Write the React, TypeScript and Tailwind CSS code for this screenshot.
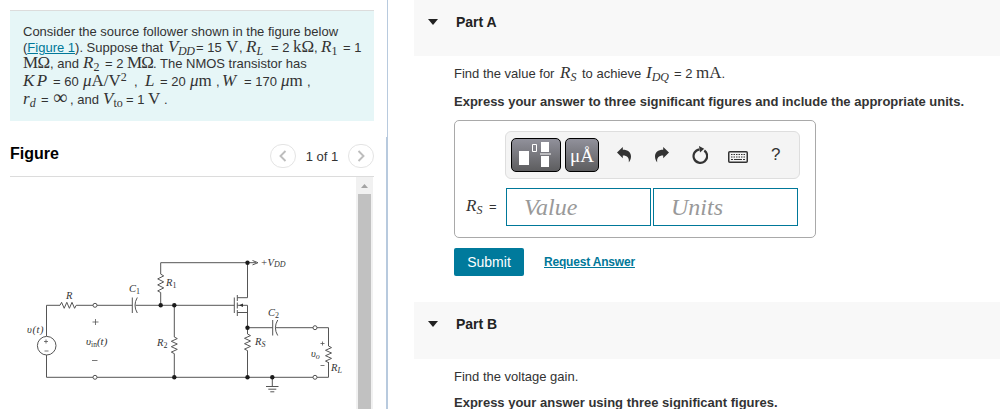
import type { ReactNode } from 'react'

interface SegProps {
  w: string
  children: ReactNode
}

function Seg({ w, children }: SegProps) {
  return <span className={`shrink-0 whitespace-pre ${w}`}>{children}</span>
}

interface MathProps {
  children: ReactNode
  sub?: string
  upright?: boolean
  subUpright?: boolean
}

function M({ children, sub, upright, subUpright }: MathProps) {
  return (
    <span
      className={`font-['Liberation_Serif',serif] text-[17px] leading-[0] ${upright ? '' : 'italic'}`}
    >
      {children}
      {sub && (
        <span
          className={`relative top-[2.5px] text-[12px] ${subUpright ? 'not-italic' : ''}`}
        >
          {sub}
        </span>
      )}
    </span>
  )
}

function Line({ h, children }: { h: string; children: ReactNode }) {
  return <div className={`flex items-baseline ${h}`}>{children}</div>
}

function Problem() {
  return (
    <div className="ml-[10px] mt-[10px] h-[111px] w-[364px] border-t border-[#dcdcdc] bg-[#e6f6f7] pt-[13px] pl-[13px] text-[13px] leading-4 text-[#333]">
      <Line h="h-4">
        <Seg w="">Consider the source follower shown in the figure below</Seg>
      </Line>
      <Line h="h-4">
        <Seg w="w-[145px]">
          (<a className="text-[#007899] underline">Figure 1</a>). Suppose that
        </Seg>
        <Seg w="w-[28px] tracking-[-0.4px]"><M sub="DD">V</M></Seg>
        <Seg w="w-[30px]">= 15</Seg>
        <Seg w="w-[13px]"><M upright>V</M></Seg>
        <Seg w="w-[7px]">,</Seg>
        <Seg w="w-[25px]"><M sub="L">R</M></Seg>
        <Seg w="w-[22px]">= 2</Seg>
        <Seg w="w-[21px]"><M upright>kΩ</M></Seg>
        <Seg w="w-[7px]">,</Seg>
        <Seg w="w-[22px]"><M sub="1" subUpright>R</M></Seg>
        <Seg w="w-[20px]">= 1</Seg>
      </Line>
      <Line h="h-[18px]">
        <Seg w="w-[27px] tracking-[-0.6px]"><M upright>MΩ</M></Seg>
        <Seg w="w-[33px]">, and</Seg>
        <Seg w="w-[22px]"><M sub="2" subUpright>R</M></Seg>
        <Seg w="w-[22px]">= 2</Seg>
        <Seg w="w-[26px] tracking-[-0.8px]"><M upright>MΩ</M></Seg>
        <Seg w="">. The NMOS transistor has</Seg>
      </Line>
      <Line h="h-[18px]">
        <Seg w="w-[30px] tracking-[2.5px]"><M>KP</M></Seg>
        <Seg w="w-[30px]">= 60</Seg>
        <Seg w="w-[51px]">
          <M>μ</M>
          <M upright>A/V</M>
          <span className="relative -top-[5px] font-['Liberation_Serif',serif] text-[12px] leading-[0]">2</span>
        </Seg>
        <Seg w="w-[11px]">,</Seg>
        <Seg w="w-[15px]"><M>L</M></Seg>
        <Seg w="w-[30px]">= 20</Seg>
        <Seg w="w-[26px]"><M>μ</M><M upright>m</M></Seg>
        <Seg w="w-[6px]">,</Seg>
        <Seg w="w-[22px]"><M>W</M></Seg>
        <Seg w="w-[37px]">= 170</Seg>
        <Seg w="w-[26px]"><M>μ</M><M upright>m</M></Seg>
        <Seg w="">,</Seg>
      </Line>
      <Line h="h-[17px]">
        <Seg w="w-[18px]"><M sub="d">r</M></Seg>
        <Seg w="w-[12px]">=</Seg>
        <Seg w="w-[17px]">
          <span className="font-['Liberation_Serif',serif] text-[20px] leading-[0]">∞</span>
        </Seg>
        <Seg w="w-[33px]">, and</Seg>
        <Seg w="w-[23px]"><M sub="to" subUpright>V</M></Seg>
        <Seg w="w-[22px]">= 1</Seg>
        <Seg w="w-[16px]"><M upright>V</M></Seg>
        <Seg w="">.</Seg>
      </Line>
    </div>
  )
}

function Circuit() {
  const dots = [
    [247.5, 262.7], [160.7, 305.3], [174.3, 305.3], [247.5, 327.7],
    [174.3, 377.3], [247.5, 377.3], [272.3, 377.3],
  ]
  const rings = [[95, 305.3], [95, 377.3], [315, 327.7], [315, 377.3]]
  return (
    <svg
      width="346"
      height="232"
      viewBox="10 177 346 232"
      fill="none"
      stroke="#555"
      strokeWidth="1"
      className="shrink-0"
    >
      <path d="M46.5 336V305.3H60l1.6-3 2.6 6 2.6-6 2.6 6 2.6-6 2.6 6 1.6-3H132.3M135.5 305.3H234.3M46.5 355V377.3H328.5V362" />
      <circle cx="46.7" cy="345.7" r="9.3" />
      <path d="M132.3 297.5v15.5M137.3 297.5q-4.6 7.8 0 15.5" />
      <path d="M160.7 305.3V292.5l-3-1.6 6-3-6-3 6-3-6-3 6-3-3-1.8V262.7H256" />
      <path d="M252.5 260.5l5.5 2.2-5.5 2.2" />
      <path d="M174.3 305.3V337l3 1.6-6 2.7 6 2.7-6 2.7 6 2.7-6 2.7 3 1.5V377.3" />
      <path d="M234.3 297.5v15.5M237.3 295v6M237.3 302.5v6M237.3 310v6M247.5 262.7V297.7H237.3M237.3 305.3H247.5V334l3 1.6-6 2.7 6 2.7-6 2.7 6 2.7-6 2.7 3 1.5V377.3M237.3 312.5H247.5" />
      <path d="M239 305.3l4-1.8v3.6z" fill="#333" stroke="none" />
      <path d="M247.5 327.7H272.7M272.7 320v15.5M277.7 320q-4.6 7.8 0 15.5M275.5 327.7H328.5V346l3 1.6-6 2.7 6 2.7-6 2.7 6 2.7-6 2.7 3 1.5" />
      <path d="M272.3 377.3V386.5M266 386.5h12.5M268.3 389.2h8M270.3 391.8h4" />
      {dots.map(([x, y]) => (
        <circle key={`${x}-${y}`} cx={x} cy={y} r="2.2" fill="#1c1c1c" stroke="none" />
      ))}
      {rings.map(([x, y]) => (
        <circle key={`${x}-${y}`} cx={x} cy={y} r="2" fill="#fff" />
      ))}
      <g
        fill="#333"
        stroke="none"
        className="font-['Liberation_Serif',serif] text-[10.5px] italic"
      >
        <text x="66" y="299">R</text>
        <text x="129" y="292">C<tspan dy="2" fontSize="8" fontStyle="normal">1</tspan></text>
        <text x="166" y="286">R<tspan dy="2" fontSize="8" fontStyle="normal">1</tspan></text>
        <text x="157" y="346">R<tspan dy="2" fontSize="8" fontStyle="normal">2</tspan></text>
        <text x="255" y="345">R<tspan dy="2" fontSize="8">S</tspan></text>
        <text x="268" y="316">C<tspan dy="2" fontSize="8" fontStyle="normal">2</tspan></text>
        <text x="331" y="371">R<tspan dy="2" fontSize="8">L</tspan></text>
        <text x="260.5" y="266">+V<tspan dy="1" fontSize="8">DD</tspan></text>
        <text x="27" y="333" textLength="16.5">υ(t)</text>
        <text x="86" y="345" fontSize="11">υ<tspan dy="2" fontSize="7.5" fontStyle="normal">in</tspan><tspan dy="-2">(t)</tspan></text>
        <text x="311" y="357">υ<tspan dy="2" fontSize="8">o</tspan></text>
      </g>
      <path d="M92.5 322h6M95.5 319v6M92 360.5h5.5M44 341.5h4M46 339.5v4M44.5 351h4M320.5 343.5h4M322.5 341.5v4M320.5 365.5h4" strokeWidth=".8" />
    </svg>
  )
}

function Chevron({ d }: { d: string }) {
  return (
    <button className="flex h-6 w-[26px] items-center justify-center rounded-full border border-[#e4e4e4]">
      <svg width="8" height="12" viewBox="0 0 8 12" fill="none" stroke="#bdbdbd" strokeWidth="1.9">
        <path d={d} />
      </svg>
    </button>
  )
}

function Figure() {
  return (
    <div className="ml-[10px] w-[364px]">
      <div className="flex h-[56px] border-b border-[#dcdcdc]">
        <h2 className="mt-[23px] text-base leading-5 font-bold text-black">Figure</h2>
        <div className="mt-[23px] ml-auto flex h-6 w-[104px] items-center justify-between">
          <Chevron d="M6.5 1L1.5 6l5 5" />
          <span className="pt-0.5 text-[13px] text-[#333]">1 of 1</span>
          <Chevron d="M1.5 1l5 5-5 5" />
        </div>
      </div>
      <div className="flex h-[232px]">
        <Circuit />
        <div className="flex w-[17px] flex-col items-center bg-[#f1f1f1]">
          <svg width="17" height="17" viewBox="0 0 17 17" fill="#a3a3a3">
            <path d="M5 11l3.5-4 3.5 4z" />
          </svg>
          <div className="w-[13px] flex-1 bg-[#c1c1c1]" />
        </div>
      </div>
    </div>
  )
}

function PartHeader({ title, h }: { title: string; h: string }) {
  return (
    <div className={`flex bg-[#f8f8f8] pl-[14px] ${h}`}>
      <svg width="10" height="6" viewBox="0 0 10 6" className="mt-[19px]" fill="#222">
        <path d="M0 0h10L5 6z" />
      </svg>
      <h2 className="mt-[13px] ml-[18px] text-sm leading-[18px] font-bold text-[#222]">{title}</h2>
    </div>
  )
}

function TemplateIcon() {
  return (
    <svg width="48" height="32" viewBox="0 0 48 32" fill="#fff">
      <path d="M7 12h10v14H7zM29 3h8v10h-8zM29 17h8v11h-8zM28 14.5h11v1H28z" />
      <path d="M20.5 5.5h4v7h-4z" fill="none" stroke="#fff" />
    </svg>
  )
}

function Answer() {
  return (
    <div className="mt-[9px] ml-10 h-[118px] w-[362px] rounded-[5px] border border-[#a9a9a9] pt-[10px] pl-[50px]">
      <div className="flex h-12 w-[295px] items-center rounded-md border border-[#dedede] bg-[#f4f4f4] pl-[5px] text-[#333]">
        <button className="h-[34px] w-[50px] rounded-[5px] border border-black bg-linear-to-b from-[#91919b] to-[#5d5d5f]">
          <TemplateIcon />
        </button>
        <button className="ml-1 h-[34px] w-[34px] rounded-[5px] border border-black bg-linear-to-b from-[#91919b] to-[#5d5d5f] font-['Liberation_Serif',serif] text-[19px] leading-[34px] text-white">
          μÅ
        </button>
        <svg width="14" height="16" viewBox="0 0 14 16" className="ml-[18px]" fill="#333">
          <path d="M0 5.5L5.8 0v2.8C11 2.8 14 5.5 14 9.500C14 12 13 14 11.800 15.200C12.300 11 10.500 8.600 5.800 8.600v2.600z" />
        </svg>
        <svg width="14" height="16" viewBox="0 0 14 16" className="ml-6" fill="#333">
          <path d="M14 5.500L8.200 0v2.800C3 2.800 0 5.500 0 9.500C0 12 1 14 2.200 15.200C1.700 11 3.500 8.600 8.200 8.600v2.600z" />
        </svg>
        <svg width="16" height="18" viewBox="0 0 16 18" className="ml-[23px]" fill="none" stroke="#333" strokeWidth="2.2">
          <path d="M12.300 4.500A6.800 6.800 0 1 1 7.500 3.300" />
          <path d="M7 0l5.200 2.800L8 6.500z" fill="#333" stroke="none" />
        </svg>
        <svg width="20" height="12" viewBox="0 0 20 12" className="mt-1 ml-5" fill="none" stroke="#333">
          <rect x=".75" y=".75" width="18.5" height="10.5" rx="1" strokeWidth="1.5" />
          <path d="M3 3.500h14M3 6h14" strokeDasharray="1.5 1" />
          <path d="M3 8.500h2M6 8.500h8M15 8.500h2" />
        </svg>
        <span className="ml-[23px] text-[17px]">?</span>
      </div>
      <div className="mt-[9px] -ml-[39px] flex h-[38px] items-center">
        <div className="flex w-[40px] shrink-0 items-baseline text-[13px] text-[#333]">
          <Seg w="w-[23px]"><M sub="S">R</M></Seg>
          <span>=</span>
        </div>
        <input
          placeholder="Value"
          className="h-[38px] w-[145px] border border-[#007899] bg-white pl-[17px] font-['Liberation_Serif',serif] text-2xl italic placeholder:text-[#999]"
        />
        <input
          placeholder="Units"
          className="ml-0.5 h-[38px] w-[145px] border border-[#007899] bg-white pl-[17px] font-['Liberation_Serif',serif] text-2xl italic placeholder:text-[#999]"
        />
      </div>
    </div>
  )
}

export default function App() {
  return (
    <div className="flex h-[409px] w-[1000px] overflow-hidden bg-white font-['Liberation_Sans',Arial,sans-serif]">
      <div className="w-[386px] shrink-0">
        <Problem />
        <Figure />
      </div>
      <div className="flex w-[28px] shrink-0 flex-col">
        <div className="ml-px h-[137px] w-px bg-[#b8cade]" />
        <div className="w-0.5 flex-1 bg-[#b8cade]" />
      </div>
      <div className="w-[586px] shrink-0">
        <PartHeader title="Part A" h="h-[56px]" />
        <div className="mt-[10px] ml-10 flex h-[17px] items-baseline text-[13px] leading-4 text-[#333]">
          <Seg w="w-[106px]">Find the value for </Seg>
          <Seg w="w-[22px]"><M sub="S">R</M></Seg>
          <Seg w="w-[64px]">to achieve</Seg>
          <Seg w="w-[28px]"><M sub="DQ">I</M></Seg>
          <Seg w="w-[22px]">= 2</Seg>
          <Seg w=""><M upright>mA</M>.</Seg>
        </div>
        <p className="mt-[10px] ml-10 h-[18px] text-[13px] leading-[18px] font-bold text-[#333]">
          Express your answer to three significant figures and include the appropriate units.
        </p>
        <Answer />
        <div className="mt-[10px] ml-10 flex h-[28px] items-center">
          <button className="h-7 w-[70px] rounded-[2px] bg-[#007a9c] text-sm text-white">Submit</button>
          <a className="ml-5 text-xs font-bold tracking-[-0.19px] text-[#007899] underline">Request Answer</a>
        </div>
        <div className="h-[26px]" />
        <PartHeader title="Part B" h="h-[57px]" />
        <p className="mt-[9px] ml-10 h-[18px] text-[13px] leading-[18px] text-[#333]">
          Find the voltage gain.
        </p>
        <p className="mt-2 ml-10 h-[18px] text-[13px] leading-[18px] font-bold text-[#333]">
          Express your answer using three significant figures.
        </p>
      </div>
    </div>
  )
}
